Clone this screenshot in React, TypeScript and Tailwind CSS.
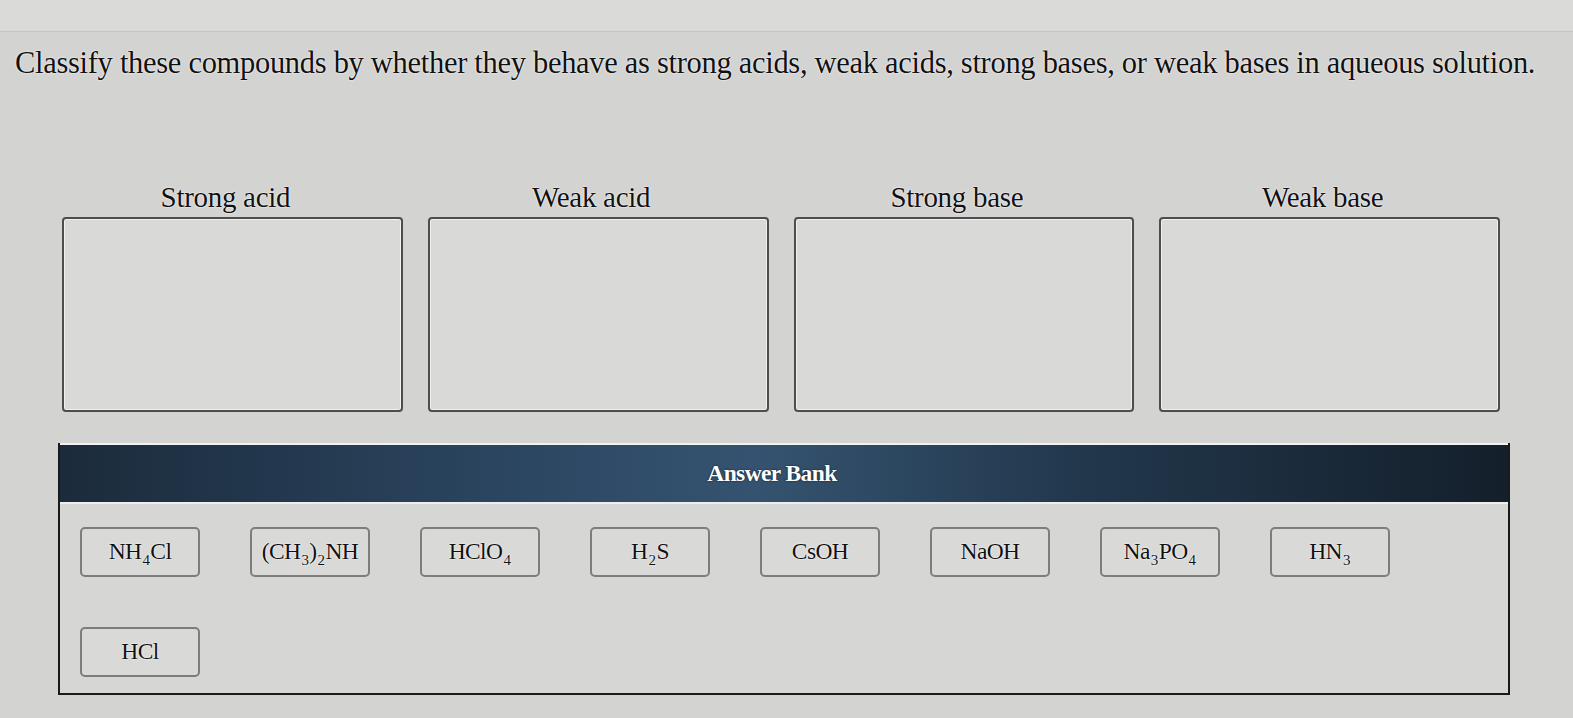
import React from 'react'

type Chip = { id: string; parts: (string | { sub: string })[] }

const categories = ['Strong acid', 'Weak acid', 'Strong base', 'Weak base']

const chips: Chip[] = [
  { id: 'nh4cl', parts: ['NH', { sub: '4' }, 'Cl'] },
  { id: 'ch32nh', parts: ['(CH', { sub: '3' }, ')', { sub: '2' }, 'NH'] },
  { id: 'hclo4', parts: ['HClO', { sub: '4' }] },
  { id: 'h2s', parts: ['H', { sub: '2' }, 'S'] },
  { id: 'csoh', parts: ['CsOH'] },
  { id: 'naoh', parts: ['NaOH'] },
  { id: 'na3po4', parts: ['Na', { sub: '3' }, 'PO', { sub: '4' }] },
  { id: 'hn3', parts: ['HN', { sub: '3' }] },
  { id: 'hcl', parts: ['HCl'] }
]

const halo = '[text-shadow:0_0_2px_#ffffff,0_0_1px_#ffffff]'

function Formula({ parts }: { parts: Chip['parts'] }) {
  return (
    <span className="tracking-[-0.6px]">
      {parts.map((p, i) =>
        typeof p === 'string' ? (
          <span key={i}>{p}</span>
        ) : (
          <sub key={i} className="text-[15px] bottom-[-0.4em] mx-[1px]">
            {p.sub}
          </sub>
        )
      )}
    </span>
  )
}

export default function App() {
  return (
    <div className="w-full h-[718px] overflow-hidden bg-[#d3d3d2] font-['Liberation_Serif',serif] text-[#111]">
      {/* browser strip above the question */}
      <div className="h-[32px] bg-[#dadad9] border-b border-[#c4c4c3]" />

      {/* Question text */}
      <h1 className={`mt-[11px] pl-[15px] whitespace-nowrap text-[30.5px] leading-[40px] tracking-[-0.3px] ${halo}`}>
        Classify these compounds by whether they behave as strong acids, weak acids, strong bases, or weak bases in aqueous solution.
      </h1>

      {/* Drop targets */}
      <div className="mt-[97px] pl-[62px] w-[1500px] grid grid-cols-4 gap-x-[25px]">
        {categories.map(name => (
          <div key={name} className="flex flex-col">
            <div className={`text-center text-[29px] leading-[34px] tracking-[-0.3px] pr-[14px] ${halo}`}>{name}</div>
            <div className="mt-[3px] h-[195px] rounded-[4px] border-2 border-[#4d4d4d] bg-[#d9d9d8] shadow-[inset_0_0_0_1px_#f0f0f0]" />
          </div>
        ))}
      </div>

      {/* Answer bank */}
      <div className="mt-[31px] ml-[58px] w-[1452px] border-2 border-[#1a1a1a] border-t-0">
        <div className="h-[59px] flex items-center justify-center pr-[24px] bg-[linear-gradient(90deg,#1b2b3b_0%,#2b4560_30%,#355370_48%,#22384d_70%,#141f2b_100%)] border-t-2 border-[#f2f2f2]">
          <span className="text-white text-[23.5px] font-bold tracking-[-0.6px] [text-shadow:0_0_2px_#0a1520]">Answer Bank</span>
        </div>
        <div className="h-[191px] bg-[#d6d6d5] border-t-2 border-[#eeeeee] pl-[20px] pt-[23px] grid grid-cols-[repeat(8,120px)] auto-rows-[50px] gap-x-[50px] gap-y-[50px] content-start">
          {chips.map(c => (
            <div
              key={c.id}
              className={`flex items-center justify-center rounded-[5px] border-2 border-[#7d7d7d] bg-[#d9d9d8] text-[23.5px] ${halo}`}
            >
              <Formula parts={c.parts} />
            </div>
          ))}
        </div>
      </div>
    </div>
  )
}
